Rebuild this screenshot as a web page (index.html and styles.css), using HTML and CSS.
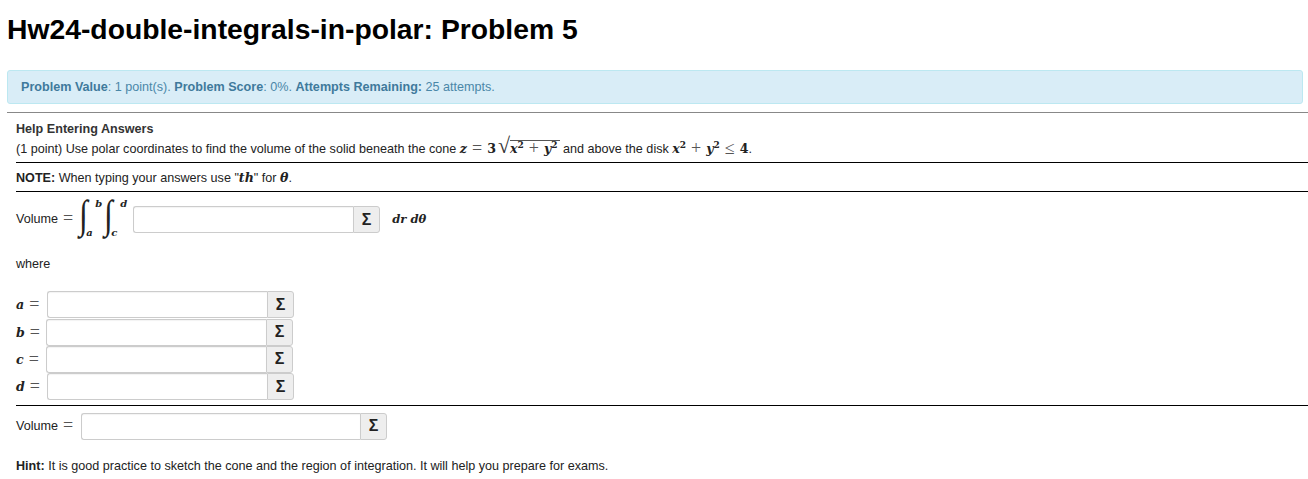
FILE: index.html
```html
<!DOCTYPE html>
<html lang="en">
<head>
  <meta charset="UTF-8">
  <title>Hw24-double-integrals-in-polar: Problem 5</title>
  <link rel="stylesheet" href="styles.css">
</head>
<body>

  <h1>Hw24-double-integrals-in-polar: Problem 5</h1>

  <div class="alert">
    <b>Problem Value</b>: 1 point(s). <b>Problem Score</b>: 0%. <b>Attempts Remaining:</b> 25 attempts.
  </div>

  <hr class="rule-top">

  <div class="problem">
    <div class="help">Help Entering Answers</div>
    <div class="line">
      (1 point) Use polar coordinates to find the volume of the solid beneath the cone
      <span class="m"><i>z</i><span class="op">=</span><b>3</b><span class="sqrt">√</span><span class="radicand"><i>x</i><sup>2</sup><span class="op">+</span><i>y</i><sup>2</sup></span></span>
      and above the disk
      <span class="m"><i>x</i><sup>2</sup><span class="op">+</span><i>y</i><sup>2</sup><span class="op">≤</span><b>4</b></span>.
    </div>
    <hr class="rule">
    <div class="note"><b>NOTE:</b> When typing your answers use "<span class="m"><i>th</i></span>" for <span class="m"><i>θ</i></span>.</div>
    <hr class="rule">

    <div class="volume-row">
      <span>Volume<span class="op">=</span></span>
      <span class="int"><span class="int-sign">∫</span><i class="up">b</i><i class="low">a</i></span>
      <span class="int"><span class="int-sign">∫</span><i class="up">d</i><i class="low">c</i></span>
      <div class="answer w-main">
        <input type="text">
        <button>Σ</button>
      </div>
      <span class="m dr"><i>dr dθ</i></span>
    </div>

    <p class="where">where</p>

    <div class="limits">
      <div class="limit"><span class="m lbl"><i>a</i><span class="op">=</span></span>
        <div class="answer w-limit"><input type="text"><button>Σ</button></div></div>
      <div class="limit nudge"><span class="m lbl"><i>b</i><span class="op">=</span></span>
        <div class="answer w-limit"><input type="text"><button>Σ</button></div></div>
      <div class="limit nudge"><span class="m lbl"><i>c</i><span class="op">=</span></span>
        <div class="answer w-limit"><input type="text"><button>Σ</button></div></div>
      <div class="limit"><span class="m lbl"><i>d</i><span class="op">=</span></span>
        <div class="answer w-limit"><input type="text"><button>Σ</button></div></div>
    </div>

    <hr class="rule rule-vol">

    <div class="final-row">
      <span>Volume<span class="op">=</span></span>
      <div class="answer w-main"><input type="text"><button>Σ</button></div>
    </div>

    <p class="hint"><b>Hint:</b> It is good practice to sketch the cone and the region of integration. It will help you prepare for exams.</p>
  </div>

</body>
</html>
```

FILE: styles.css
```css
html, body { margin: 0; padding: 0; }
body { font-family: "Liberation Sans", Arial, sans-serif; font-size: 12.6px; line-height: 17px; color: #222; background: #fff; overflow: hidden; }
h1 { margin: 0; padding: 12px 0 0 7px; height: 57px; box-sizing: border-box; font-size: 28.3px; line-height: 34px; color: #000; font-weight: bold; }
.alert { margin: 13px 5px 0 7px; height: 34px; box-sizing: border-box; padding: 8px 13px; background: #d9edf7; border: 1px solid #bce8f1; border-radius: 3px; color: #4a87a8; }
.alert b { color: #3f7a9c; }
hr { border: none; margin: 0; }
.rule-top { margin: 8px 0 0 7px; height: 1px; background: #888; }
.problem { padding: 0 0 0 16px; }
.help { margin-top: 8px; font-weight: bold; color: #333; }
.line { margin-top: 2px; white-space: nowrap; }
.rule { height: 1px; background: #000; margin-top: 5px; }
.line + .rule { margin-top: 4px; }
.note { margin-top: 6px; }
.note + .rule { margin-top: 4px; }
.m { font-family: "DejaVu Serif", serif; font-size: 12.6px; color: #222; }
.m i, .m b { font-weight: bold; }
.op { display: inline-block; margin: 0 5px; vertical-align: -1px; font-family: "Liberation Serif", serif; font-size: 18px; line-height: 0; color: #555; }
.m sup { font-size: 9px; line-height: 0; font-weight: bold; }
.sqrt { margin-left: 2px; font-family: "Liberation Serif", serif; font-size: 22px; line-height: 0; color: #333; }
.radicand { border-top: 1px solid #555; padding-right: 2px; }
.volume-row { display: flex; align-items: center; height: 27px; margin-top: 14px; }
.int { position: relative; width: 25px; height: 40px; margin-left: 1px; }
.int + .int { margin-left: 0; }
.int-sign { margin-top: -4px; font-family: "Liberation Serif", serif; font-size: 40px; line-height: 38px; display: block; color: #222; transform: scaleX(0.8); transform-origin: left center; }
.int .up, .int .low { position: absolute; font-family: "DejaVu Serif", serif; font-size: 10px; line-height: 10px; font-weight: bold; color: #222; }
.int .up { top: -1px; left: 16px; }
.int .low { bottom: 2px; left: 7px; }
.answer { display: flex; height: 27px; box-sizing: border-box; }
.answer input { flex: 1; min-width: 0; box-sizing: border-box; height: 27px; padding: 0 6px; margin: 0; border: 1px solid #ccc; border-right: none; border-radius: 3px 0 0 3px; background: #fff; box-shadow: inset 0 1px 1px rgba(0,0,0,0.05); }
.answer button { width: 27px; height: 27px; box-sizing: border-box; margin: 0; padding: 0; border: 1px solid #ccc; border-radius: 0 3px 3px 0; background: #eee; font-family: "Liberation Sans", sans-serif; font-size: 16px; font-weight: bold; color: #222; }
.w-main { width: 247px; margin-left: 4px; }
.dr { margin-left: 12px; font-size: 11.6px; }
.where { margin: 23px 0 0; }
.limits { margin-top: 18px; }
.limit { display: flex; align-items: center; height: 27.4px; }
.lbl { width: 31px; }
.nudge .lbl { width: 30px; }
.w-limit { width: 247px; }
.rule-vol { margin-top: 4px; }
.final-row { display: flex; align-items: center; margin-top: 7px; height: 27px; }
.final-row .w-main { margin-left: 3px; width: 306px; }
.hint { margin: 18px 0 0; }
```
